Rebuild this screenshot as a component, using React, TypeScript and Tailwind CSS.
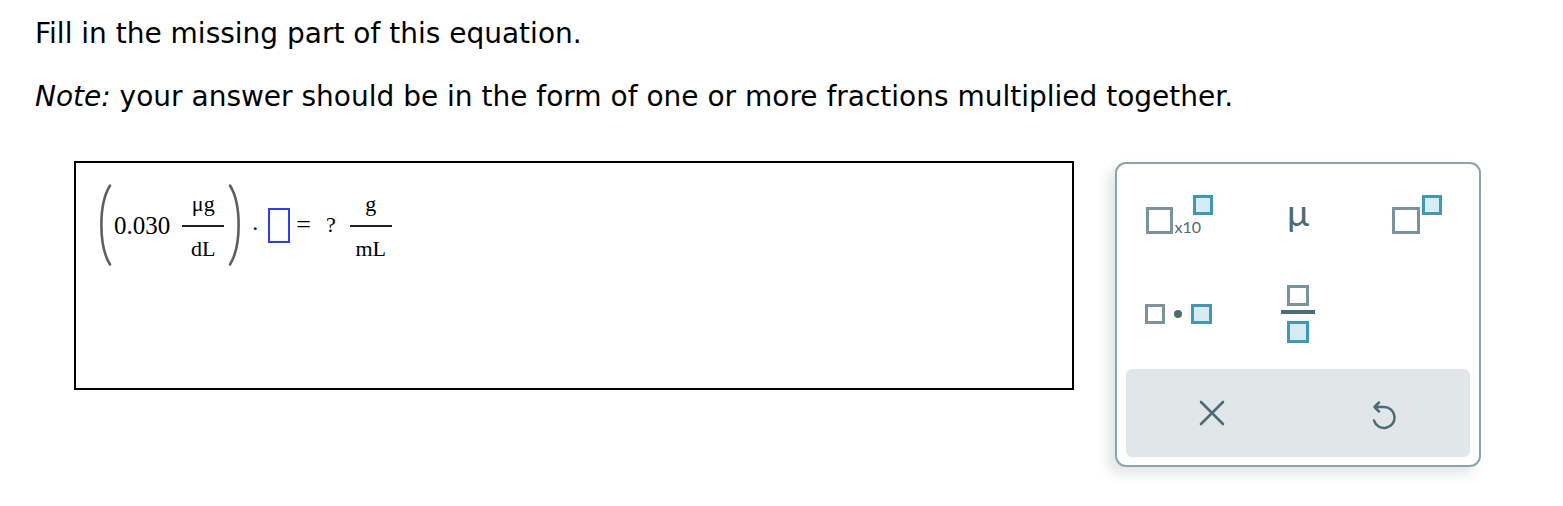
import React from "react";

const GreySq = ({ w, h, cls = "" }: { w: string; h: string; cls?: string }) => (
  <div className={`${w} ${h} border-[3px] border-[#7b939c] bg-white ${cls}`} />
);

const BlueSq = ({ w, h, cls = "" }: { w: string; h: string; cls?: string }) => (
  <div className={`${w} ${h} border-[3px] border-[#3f98b4] bg-[#d4ecf2] ${cls}`} />
);

const LeftParen = () => (
  <svg width="14" height="82" viewBox="0 0 14 82" className="shrink-0">
    <path d="M12 1.5 C0.5 20 0.5 62 12 80.5" fill="none" stroke="#5f5f5f" strokeWidth="2.6" strokeLinecap="round" />
  </svg>
);

const RightParen = () => (
  <svg width="14" height="82" viewBox="0 0 14 82" className="shrink-0">
    <path d="M2 1.5 C13.5 20 13.5 62 2 80.5" fill="none" stroke="#5f5f5f" strokeWidth="2.6" strokeLinecap="round" />
  </svg>
);

const Frac = ({ num, den, w }: { num: string; den: string; w: string }) => (
  <div className={`flex flex-col items-center ${w} mt-[3px]`}>
    <div className="text-[22px] leading-[24px] h-[24px]">{num}</div>
    <div className="w-full h-[1.5px] bg-[#222] mt-[9px] mb-[10px]" />
    <div className="text-[22px] leading-[24px] h-[24px]">{den}</div>
  </div>
);

export default function App() {
  return (
    <div
      className="w-[1563px] h-[506px] bg-white overflow-hidden text-black"
      style={{ fontFamily: '"DejaVu Sans", Verdana, sans-serif' }}
    >
      <div className="pl-[35px] pt-[17px]">
        <p className="text-[28px] leading-[34px]">Fill in the missing part of this equation.</p>
        <p className="text-[28px] leading-[34px] mt-[29px]">
          <i>Note:</i> your answer should be in the form of one or more fractions multiplied together.
        </p>
      </div>

      <div className="flex items-start pl-[74px] mt-[47px]">
        {/* Equation box */}
        <div
          className="w-[1000px] h-[229px] border-2 border-black pl-[22px] pt-[21px]"
          style={{ fontFamily: '"Liberation Serif", "Times New Roman", serif' }}
        >
          <div className="flex items-center h-[82px]">
            <LeftParen />
            <span className="text-[25px] leading-none ml-[2px]">0.030</span>
            <div className="ml-[12px]">
              <Frac num="μg" den="dL" w="w-[42px]" />
            </div>
            <div className="ml-[4px]">
              <RightParen />
            </div>
            <span className="text-[24px] leading-none ml-[9px] mt-[5px]">·</span>
            <div className="w-[22px] h-[35px] border-2 border-[#2f3df0] ml-[9px]" />
            <span className="text-[26px] leading-none ml-[6px]">=</span>
            <span className="text-[22px] leading-none ml-[15px]">?</span>
            <div className="ml-[14px]">
              <Frac num="g" den="mL" w="w-[42px]" />
            </div>
          </div>
        </div>

        {/* Palette */}
        <div className="ml-[41px] mt-[1px] w-[366px] h-[305px] border-2 border-[#8ea4ac] rounded-[11px] bg-white shadow-[-7px_7px_12px_rgba(40,60,70,0.13)] pt-[1px] pb-[8px] flex flex-col">
          <div className="grid grid-cols-3">
            {/* x10 */}
            <div className="h-[99px] flex items-center justify-center">
              <div className="flex items-start ml-[4px]">
                <GreySq w="w-[27px]" h="h-[27px]" cls="mt-[12px]" />
                <span
                  className="text-[16px] leading-none mt-[24px] ml-[2px] text-[#4b6b76]"
                  style={{ fontFamily: "Lato, sans-serif" }}
                >
                  x10
                </span>
                <BlueSq w="w-[20px]" h="h-[20px]" cls="-ml-[8px]" />
              </div>
            </div>
            {/* mu */}
            <div className="h-[99px] flex items-center justify-center">
              <span
                className="text-[37px] leading-none text-[#4b6b76] -mt-[6px]"
                style={{ fontFamily: "Lato, sans-serif" }}
              >
                μ
              </span>
            </div>
            {/* superscript */}
            <div className="h-[99px] flex items-center justify-center">
              <div className="flex items-start -ml-[3px]">
                <GreySq w="w-[28px]" h="h-[27px]" cls="mt-[12px]" />
                <BlueSq w="w-[20px]" h="h-[20px]" cls="ml-[2px]" />
              </div>
            </div>
            {/* dot */}
            <div className="h-[99px] flex items-center justify-center">
              <div className="flex items-center ml-[2px]">
                <GreySq w="w-[20px]" h="h-[20px]" />
                <div className="w-[8px] h-[8px] rounded-full bg-[#4b6b76] mx-[9px]" />
                <BlueSq w="w-[21px]" h="h-[20px]" />
              </div>
            </div>
            {/* fraction */}
            <div className="h-[99px] flex items-center justify-center">
              <div className="flex flex-col items-center">
                <GreySq w="w-[22px]" h="h-[21px]" />
                <div className="w-[34px] h-[4px] bg-[#4b6b76] my-[4px]" />
                <BlueSq w="w-[22px] mt-[3px]" h="h-[22px]" />
              </div>
            </div>
            <div className="h-[99px]" />
          </div>

          <div className="mx-[9px] mt-[6px] h-[88px] rounded-[6px] bg-[#e1e6e9] grid grid-cols-2">
            <div className="flex items-center justify-center">
              <svg width="26" height="26" viewBox="0 0 26 26">
                <path d="M2 2 L24 24 M24 2 L2 24" stroke="#4b6b76" strokeWidth="2.6" strokeLinecap="round" />
              </svg>
            </div>
            <div className="flex items-center justify-center">
              <svg width="30" height="30" viewBox="0 0 30 30" className="mt-[4px]">
                <path
                  d="M10 2.5 L5.5 7 L10 11.5 M5.5 7 H15 A10.5 10.5 0 1 1 5 20.5"
                  fill="none"
                  stroke="#4b6b76"
                  strokeWidth="2.5"
                  strokeLinecap="round"
                  strokeLinejoin="round"
                />
              </svg>
            </div>
          </div>
        </div>
      </div>
    </div>
  );
}
